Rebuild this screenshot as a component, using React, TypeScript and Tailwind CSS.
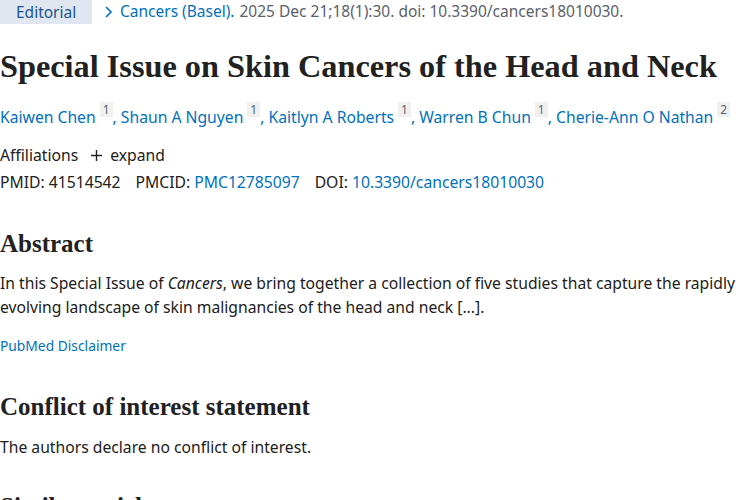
import React from "react";

const body = { fontFamily: '"Noto Sans", "Open Sans", sans-serif' };
const serif = { fontFamily: '"Liberation Serif", "DejaVu Serif", serif' };

function Sup({ n }: { n: string }) {
  return (
    <sup className="ml-[4px] inline-block bg-[#f0f0f0] px-[3px] text-[12px] leading-[15px] text-[#5b616b] align-[3px]">
      {n}
    </sup>
  );
}

function Author({ name, n, last }: { name: string; n: string; last?: boolean }) {
  return (
    <span>
      <a className="text-[#0071bc]">{name}</a>
      <Sup n={n} />
      {last ? null : <span className="text-[#0071bc]">, </span>}
    </span>
  );
}

export default function App() {
  return (
    <div className="w-[750px] h-[500px] overflow-hidden bg-white text-[#212121]" style={body}>
      <div className="flex items-center h-[24px] text-[15.5px]">
        <div className="h-[24px] w-[92px] bg-[#dfe6ef] pl-[16px] leading-[24px] text-[#205493]">Editorial</div>
        <svg className="ml-[12px]" width="10" height="14" viewBox="0 0 10 14">
          <path d="M2 2 L7 7 L2 12" fill="none" stroke="#0071bc" strokeWidth="1.6" />
        </svg>
        <span className="ml-[6px] text-[#0071bc]">Cancers (Basel).</span>
        <span className="ml-[5px] text-[#5b616b]">2025 Dec 21;18(1):30. doi: 10.3390/cancers18010030.</span>
      </div>

      <h1 className="mt-[23px] text-[32.3px] font-bold leading-[38px] text-[#212121]" style={serif}>
        Special Issue on Skin Cancers of the Head and Neck
      </h1>

      <div className="mt-[20px] text-[15.7px] leading-[24px]">
        <Author name="Kaiwen Chen" n="1" />
        <Author name="Shaun A Nguyen" n="1" />
        <Author name="Kaitlyn A Roberts" n="1" />
        <Author name="Warren B Chun" n="1" />
        <Author name="Cherie-Ann O Nathan" n="2" last />
      </div>

      <div className="mt-[14px] flex items-center text-[15.7px] leading-[24px]">
        <span>Affiliations</span>
        <svg className="ml-[12px]" width="13" height="13" viewBox="0 0 13 13">
          <path d="M6.5 1 V12 M1 6.5 H12" stroke="#212121" strokeWidth="1.4" />
        </svg>
        <span className="ml-[7px]">expand</span>
      </div>

      <div className="mt-[3px] text-[15.7px] leading-[24px]">
        <span>PMID: 41514542</span>
        <span className="ml-[15px]">PMCID: </span>
        <a className="text-[#0071bc]">PMC12785097</a>
        <span className="ml-[15px]">DOI: </span>
        <a className="text-[#0071bc]">10.3390/cancers18010030</a>
      </div>

      <h2 className="mt-[35px] text-[25px] font-bold leading-[30px]" style={serif}>Abstract</h2>

      <p className="mt-[12px] text-[15.7px] leading-[24px]">
        In this Special Issue of <i>Cancers</i>, we bring together a collection of five studies that capture the rapidly
        evolving landscape of skin malignancies of the head and neck [...].
      </p>

      <div className="mt-[17px] text-[13.8px] leading-[20px] text-[#0071bc]">PubMed Disclaimer</div>

      <h2 className="mt-[36px] text-[25px] font-bold leading-[30px]" style={serif}>Conflict of interest statement</h2>

      <p className="mt-[13px] text-[15.7px] leading-[24px]">The authors declare no conflict of interest.</p>

      <h2 className="mt-[33px] text-[25px] font-bold leading-[30px]" style={serif}>Similar articles</h2>
    </div>
  );
}
